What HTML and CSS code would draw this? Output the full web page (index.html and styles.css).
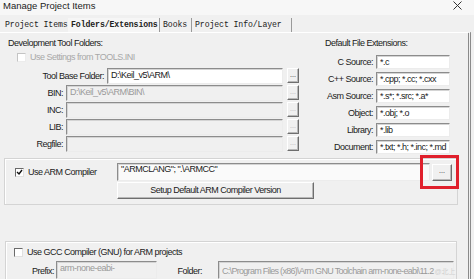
FILE: index.html
```html
<!DOCTYPE html>
<html lang="en">
<head>
    <meta charset="UTF-8">
    <title>Manage Project Items</title>
    <link rel="stylesheet" href="styles.css">
</head>
<body>
    <div class="dlg">
        <div class="titlebar">
            <span class="title">Manage Project Items</span>
            <svg class="close" width="9" height="9" viewBox="0 0 9 9"><path d="M0.5 0.5 L8.5 8.5 M8.5 0.5 L0.5 8.5" stroke="#333" stroke-width="1"/></svg>
        </div>

        <div class="tabs">
            <div class="tab t1">Project Items</div>
            <div class="tab t2 active">Folders/Extensions</div>
            <div class="tab t3">Books</div>
            <div class="tab t4">Project Info/Layer</div>
        </div>

        <div class="panel">
            <div class="top">
                <div class="dev">
                    <div class="heading">Development Tool Folders:</div>
                    <div class="chkrow disabled">
                        <span class="chk off"></span>
                        <span>Use Settings from TOOLS.INI</span>
                    </div>
                    <div class="row">
                        <label class="lbl wide">Tool Base Folder:</label>
                        <div class="edit w1">D:\Keil_v5\ARM\</div>
                        <div class="btn dots">...</div>
                    </div>
                    <div class="row">
                        <label class="lbl">BIN:</label>
                        <div class="edit w2 dis">D:\Keil_v5\ARM\BIN\</div>
                        <div class="btn dots off">...</div>
                    </div>
                    <div class="row">
                        <label class="lbl">INC:</label>
                        <div class="edit w2 dis"></div>
                        <div class="btn dots off">...</div>
                    </div>
                    <div class="row">
                        <label class="lbl">LIB:</label>
                        <div class="edit w2 dis"></div>
                        <div class="btn dots off">...</div>
                    </div>
                    <div class="row">
                        <label class="lbl">Regfile:</label>
                        <div class="edit w2 dis"></div>
                        <div class="btn dots off">...</div>
                    </div>
                </div>

                <div class="exts">
                    <div class="heading">Default File Extensions:</div>
                    <div class="xrow"><label class="xlbl">C Source:</label><div class="edit xe">*.c</div></div>
                    <div class="xrow"><label class="xlbl">C++ Source:</label><div class="edit xe">*.cpp; *.cc; *.cxx</div></div>
                    <div class="xrow"><label class="xlbl">Asm Source:</label><div class="edit xe">*.s*; *.src; *.a*</div></div>
                    <div class="xrow"><label class="xlbl">Object:</label><div class="edit xe">*.obj; *.o</div></div>
                    <div class="xrow"><label class="xlbl">Library:</label><div class="edit xe">*.lib</div></div>
                    <div class="xrow"><label class="xlbl">Document:</label><div class="edit xe">*.txt; *.h; *.inc; *.md</div></div>
                </div>
            </div>

            <div class="group armgroup">
                <div class="chkrow armcheck">
                    <span class="chk"><svg width="7" height="7" viewBox="0 0 7 7"><path d="M1 3 L3 5 L6 1" fill="none" stroke="#111" stroke-width="1.4"/></svg></span>
                    <span>Use ARM Compiler</span>
                </div>
                <div class="armright">
                    <div class="armrow">
                        <div class="edit armedit">"ARMCLANG"; ".\ARMCC"</div>
                        <div class="btn armdots">...</div>
                    </div>
                    <div class="btn setup">Setup Default ARM Compiler Version</div>
                </div>
                <div class="highlight"></div>
            </div>

            <div class="group gccgroup">
                <div class="chkrow">
                    <span class="chk"></span>
                    <span>Use GCC Compiler (GNU) for ARM projects</span>
                </div>
                <div class="gccrow">
                    <label class="plbl">Prefix:</label>
                    <div class="edit dis prefix">arm-none-eabi-</div>
                    <label class="flbl">Folder:</label>
                    <div class="edit dis folder">C:\Program Files (x86)\Arm GNU Toolchain arm-none-eabi\11.2<span class="mark">@北上</span></div>
                </div>
            </div>
        </div>
    </div>
</body>
</html>
```

FILE: styles.css
```css
body {
    margin: 0;
    background-color: #f0f0f0;
    font-family: "Liberation Sans", Arial, "Noto Sans CJK SC", sans-serif;
    font-size: 9px;
    letter-spacing: -0.5px;
    color: #1a1a1a;
}
.dlg {
    width: 474px;
    height: 279px;
    overflow: hidden;
    background-color: #f0f0f0;
}
.titlebar {
    height: 15px;
    display: flex;
    align-items: center;
    justify-content: space-between;
    background-color: #f7f7f7;
    padding: 0 12px 0 3px;
}
.title {
    font-size: 9.5px;
    letter-spacing: 0;
    color: #222;
    margin-top: -4px;
}
.close {
    margin-top: -5px;
}
.tabs {
    height: 17px;
    display: flex;
    font-family: "Liberation Mono", "Courier New", monospace;
    font-size: 8.2px;
    letter-spacing: -0.1px;
    color: #222;
}
.tab {
    border-right: 1px solid #9a9a9a;
    margin-top: 3px;
    line-height: 14px;
}
.tab.active {
    font-weight: bold;
    background-color: #f6f6f6;
}
.t1 { width: 63px; padding-left: 5px; border-right: none; }
.t2 { width: 88px; padding-left: 3px; }
.t3 { width: 28px; padding-left: 3px; }
.t4 { width: 96px; padding-left: 3px; }

.panel {
    width: 471px;
    height: 247px;
    border-right: 3px double #8a8a8a;
    border-top: 1px solid #fff;
    box-sizing: border-box;
}
.top {
    display: flex;
}
.dev {
    width: 292px;
    padding-left: 8px;
}
.heading {
    height: 10px;
    line-height: 10px;
    margin-top: 5px;
}
.chkrow {
    display: flex;
    align-items: center;
    height: 12px;
}
.dev .chkrow {
    margin-top: 3px;
    padding-left: 9px;
}
.chkrow.disabled {
    color: #a8a8a8;
}
.chk {
    width: 7px;
    height: 7px;
    background-color: #fff;
    border: 1px solid;
    border-color: #6a6a6a #e0e0e0 #e0e0e0 #6a6a6a;
    margin-right: 4px;
    display: flex;
    align-items: center;
    justify-content: center;
}
.chk.off {
    border-color: #c4c4c4 #ececec #ececec #c4c4c4;
}
.row {
    display: flex;
    align-items: center;
    height: 17px;
}
.dev .row:nth-of-type(3) {
    margin-top: 4px;
}
.lbl {
    width: 55px;
    text-align: right;
    margin-right: 3px;
}
.lbl.wide {
    width: 96px;
}
.edit {
    box-sizing: border-box;
    background-color: #fff;
    border: 1px solid;
    border-color: #8c8c8c #ececec #ececec #8c8c8c;
    box-shadow: inset 1px 1px 0 #d4d4d4;
    padding: 1px 3px;
    white-space: nowrap;
    overflow: hidden;
    line-height: 11px;
}
.edit.dis {
    background-color: #f0f0f0;
    color: #9a9a9a;
}
.w1 {
    width: 176px;
    height: 16px;
}
.w2 {
    width: 217px;
    height: 16px;
}
.btn {
    box-sizing: border-box;
    background-color: #f0f0f0;
    border: 1px solid;
    border-color: #fff #6e6e6e #6e6e6e #fff;
    box-shadow: inset -1px -1px 0 #b8b8b8;
    text-align: center;
    color: #222;
}
.dots {
    width: 12px;
    height: 15px;
    margin-left: 4px;
    font-size: 7px;
    letter-spacing: 0;
    line-height: 11px;
}
.dots.off {
    color: #b0b0b0;
}

.exts {
    width: 166px;
}
.exts .heading {
    padding-left: 25px;
}
.xrow {
    display: flex;
    align-items: center;
    height: 17px;
}
.exts .xrow:nth-of-type(2) {
    margin-top: 5px;
}
.xlbl {
    width: 73px;
    text-align: right;
    margin-right: 3px;
}
.xe {
    width: 74px;
    height: 14px;
    line-height: 10px;
}

.group {
    box-sizing: border-box;
    border: 1px solid #d4d4d4;
    box-shadow: inset 1px 1px 0 #fff;
}
.armgroup {
    position: relative;
    display: flex;
    width: 454px;
    height: 47px;
    margin: 3px 0 0 4px;
    padding: 4px 0 0 10px;
}
.armcheck {
    width: 102px;
    margin-top: 3px;
    align-self: flex-start;
}
.armright {
    display: flex;
    flex-direction: column;
}
.armrow {
    display: flex;
}
.armedit {
    width: 313px;
    height: 18px;
    background-color: #fafafa;
    line-height: 9px;
}
.armdots {
    width: 20px;
    height: 17px;
    margin: 1px 0 0 2px;
    font-size: 7px;
    letter-spacing: 0;
    line-height: 12px;
}
.setup {
    width: 197px;
    height: 17px;
    margin-top: 1px;
    line-height: 15px;
}
.highlight {
    position: absolute;
    left: 415px;
    top: -4px;
    width: 39px;
    height: 34px;
    box-sizing: border-box;
    border: 3px solid #e0202c;
}

.gccgroup {
    width: 452px;
    height: 60px;
    margin: 36px 0 0 5px;
    padding: 4px 0 0 8px;
}
.gccrow {
    display: flex;
    align-items: flex-start;
    margin-top: 3px;
    height: 18px;
}
.plbl {
    width: 40px;
    text-align: right;
    margin: 5px 2px 0 0;
}
.prefix {
    width: 101px;
    height: 18px;
    padding-top: 1px;
}
.flbl {
    width: 45px;
    text-align: right;
    margin: 5px 16px 0 0;
}
.folder {
    width: 236px;
    height: 18px;
    padding-top: 4px;
    letter-spacing: -0.7px;
    overflow: visible;
}
.mark {
    color: #d0d0d0;
    font-size: 7px;
    letter-spacing: 0;
    margin-left: 1px;
}
```
